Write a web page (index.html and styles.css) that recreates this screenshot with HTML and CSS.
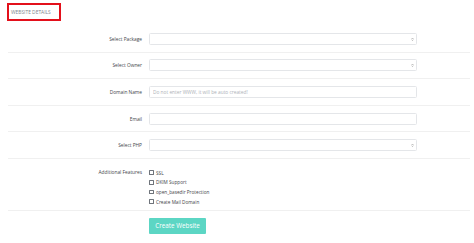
FILE: index.html
```html
<!DOCTYPE html>
<html>
<head>
<meta charset="utf-8">
<link rel="stylesheet" href="styles.css">
</head>
<body>
<div class="page">
  <div class="title-box"><span class="title">WEBSITE DETAILS</span></div>
  <form class="form">
    <div class="row">
      <label class="label">Select Package</label>
      <div class="control select"><select><option></option></select><svg class="arrow" viewBox="0 0 4 6"><path d="M1 2.4 L2 1.4 L3 2.4 M1 3.6 L2 4.6 L3 3.6" fill="none" stroke="#777" stroke-width="0.8"/></svg></div>
    </div>
    <div class="row">
      <label class="label">Select Owner</label>
      <div class="control select"><select><option></option></select><svg class="arrow" viewBox="0 0 4 6"><path d="M1 2.4 L2 1.4 L3 2.4 M1 3.6 L2 4.6 L3 3.6" fill="none" stroke="#777" stroke-width="0.8"/></svg></div>
    </div>
    <div class="row">
      <label class="label">Domain Name</label>
      <div class="control"><input type="text" placeholder="Do not enter WWW, it will be auto created!"></div>
    </div>
    <div class="row">
      <label class="label">Email</label>
      <div class="control"><input type="text"></div>
    </div>
    <div class="row">
      <label class="label">Select PHP</label>
      <div class="control select"><select><option></option></select><svg class="arrow" viewBox="0 0 4 6"><path d="M1 2.4 L2 1.4 L3 2.4 M1 3.6 L2 4.6 L3 3.6" fill="none" stroke="#777" stroke-width="0.8"/></svg></div>
    </div>
    <div class="row features">
      <label class="label">Additional Features</label>
      <div class="checks">
        <div class="check"><span class="box"></span><span>SSL</span></div>
        <div class="check"><span class="box"></span><span>DKIM Support</span></div>
        <div class="check"><span class="box"></span><span>open_basedir Protection</span></div>
        <div class="check"><span class="box"></span><span>Create Mail Domain</span></div>
      </div>
    </div>
    <div class="actions">
      <button type="button" class="btn">Create Website</button>
    </div>
  </form>
</div>
</body>
</html>
```
FILE: styles.css
```css
html, body {
  margin: 0;
  padding: 0;
  background: #fff;
  font-family: "Open Sans", "Liberation Sans", sans-serif;
}
.page {
  width: 474px;
  height: 243px;
  overflow: hidden;
  padding-top: 3px;
  box-sizing: border-box;
}
.title-box {
  margin-left: 7px;
  width: 54px;
  height: 18px;
  box-sizing: border-box;
  border: 2px solid #e3101b;
  display: flex;
  align-items: center;
  padding-left: 2px;
}
.title {
  font-size: 4.9px;
  color: #80858c;
}
.form {
  margin: 5px 4px 0 8px;
}
.row {
  display: flex;
  align-items: center;
  height: 25.6px;
  border-bottom: 1px solid #f0f0f0;
}
.label {
  width: 141px;
  text-align: right;
  font-size: 4.8px;
  color: #3f444a;
  padding-right: 7px;
  box-sizing: border-box;
  flex: none;
}
.control {
  width: 268px;
  height: 12px;
  box-sizing: border-box;
  border: 1px solid #e4e6e9;
  border-radius: 1.5px;
  display: flex;
  align-items: center;
  background: #fff;
}
.control input, .control select {
  flex: 1;
  min-width: 0;
  height: 100%;
  border: none;
  outline: none;
  background: transparent;
  appearance: none;
  -webkit-appearance: none;
  padding: 0 0 0 3px;
  margin: 0;
  font-family: inherit;
  font-size: 4.8px;
  color: #555;
}
.control input::placeholder {
  color: #aeb2b8;
}
.arrow {
  width: 3px;
  height: 4.5px;
  margin-right: 2px;
  flex: none;
}
.features {
  height: 52px;
  align-items: flex-start;
  padding-top: 8.8px;
  box-sizing: border-box;
}
.features .label {
  line-height: 9.7px;
}
.checks {
  display: flex;
  flex-direction: column;
}
.check {
  display: flex;
  align-items: center;
  height: 9.7px;
  font-size: 4.7px;
  color: #3f444a;
}
.box {
  width: 4.5px;
  height: 4.5px;
  box-sizing: border-box;
  border: 0.7px solid #6f747b;
  border-radius: 0.6px;
  margin-right: 2.5px;
  flex: none;
}
.actions {
  display: flex;
  padding: 7px 0 0 141px;
}
.btn {
  width: 57px;
  height: 16px;
  border: none;
  border-radius: 1px;
  background: #5cd6c4;
  color: #fff;
  font-family: inherit;
  font-size: 6.3px;
  padding: 0;
  margin: 0;
}
```
